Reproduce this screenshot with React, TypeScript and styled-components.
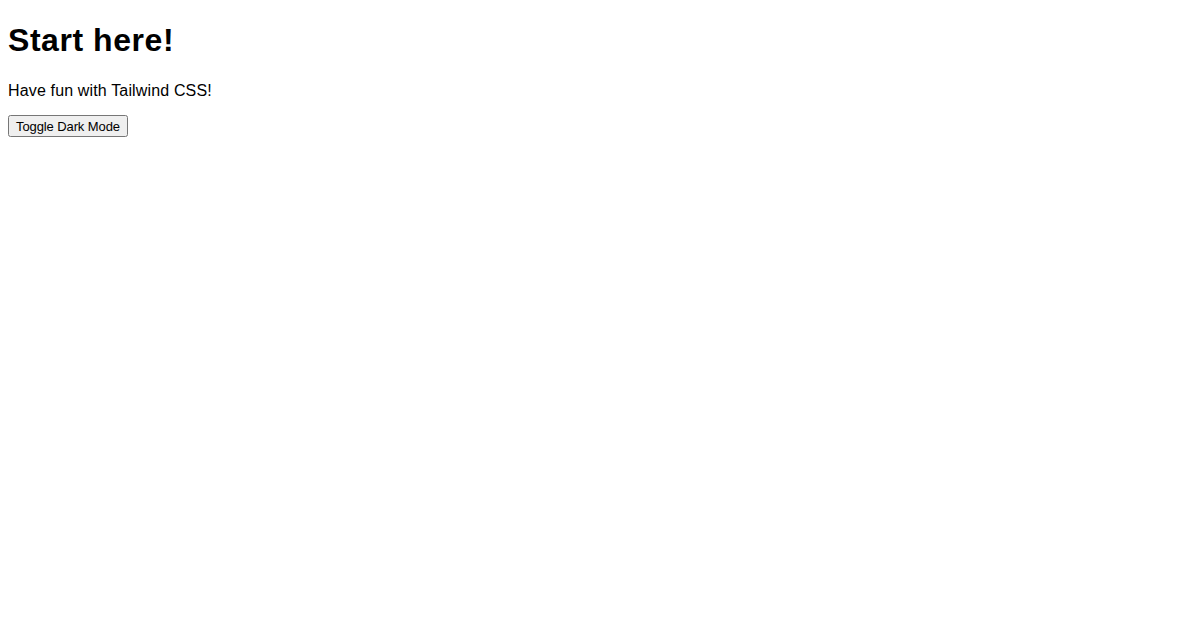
import { useState } from 'react';
import styled, { createGlobalStyle } from 'styled-components';

const GlobalStyle = createGlobalStyle`
    body {
        margin: 8px;
        font-family: "Liberation Sans", Arial, sans-serif;
        background: #ffffff;
        color: #000000;
    }
`
const Main = styled.main<{ $dark: boolean }>`
    background: ${props => props.$dark ? '#111827' : 'transparent'};
    color: ${props => props.$dark ? '#ffffff' : '#000000'};
`
const Title = styled.h1`
    font-size: 32px;
    font-weight: bold;
    letter-spacing: 0.55px;
    margin: 14px 0 22.5px;
`
const Lead = styled.p`
    font-size: 16px;
    letter-spacing: 0.15px;
    margin: 16px 0 15px;
`
const ToggleButton = styled.button`
    font-family: "Liberation Sans", Arial, sans-serif;
    font-size: 13px;
    letter-spacing: -0.1px;
    padding: 2px 6px 1px;
    margin-top: 0;
    color: #000000;
`

function App() {
    const [dark, setDark] = useState(false);
    return (
        <>
            <GlobalStyle />
            <Main $dark={dark}>
                <Title>Start here!</Title>
                <Lead>Have fun with Tailwind CSS!</Lead>
                <ToggleButton onClick={() => setDark(current => !current)}>Toggle Dark Mode</ToggleButton>
            </Main>
        </>
    )
}
export default App;
